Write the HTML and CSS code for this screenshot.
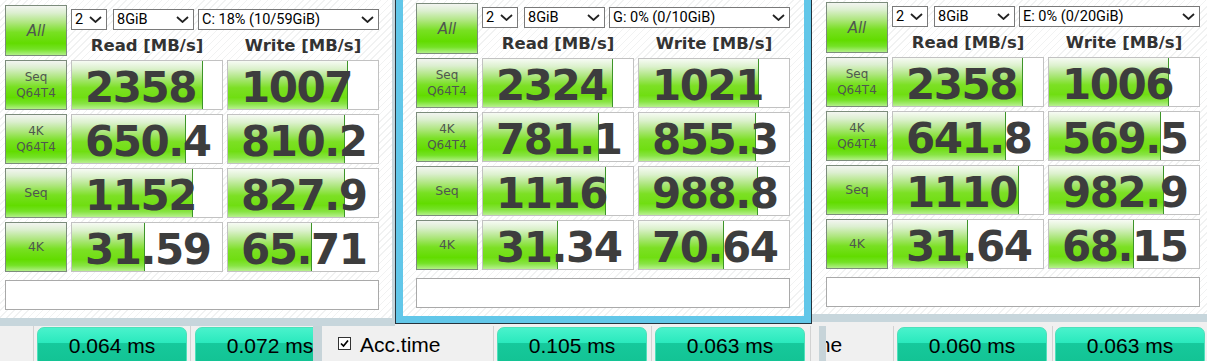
FILE: index.html
```html
<!DOCTYPE html>
<html lang="en">
<head>
<meta charset="utf-8">
<title>CrystalDiskMark comparison</title>
<link rel="stylesheet" href="styles.css">
</head>
<body>
<div class="desk">
  <div class="windows">
    <section class="win win1 hatch">
      <div class="panel">
        <div class="btn btn-all">All</div>
        <div class="head">
          <div class="controls">
            <div class="dd dd-n"><span>2</span><svg width="13" height="7" viewBox="0 0 13 7"><polyline points="1,1 6.5,6 12,1" fill="none" stroke="#222" stroke-width="1.8"/></svg></div>
            <div class="dd dd-size"><span>8GiB</span><svg width="13" height="7" viewBox="0 0 13 7"><polyline points="1,1 6.5,6 12,1" fill="none" stroke="#222" stroke-width="1.8"/></svg></div>
            <div class="dd dd-drive"><span>C: 18% (10/59GiB)</span><svg width="13" height="7" viewBox="0 0 13 7"><polyline points="1,1 6.5,6 12,1" fill="none" stroke="#222" stroke-width="1.8"/></svg></div>
          </div>
          <div class="titles"><div>Read [MB/s]</div><div>Write [MB/s]</div></div>
        </div>
        <div class="btn">Seq<br>Q64T4</div>
        <div class="cell" style="--w:130px">2358</div>
        <div class="cell" style="--w:119px">1007</div>
        <div class="btn">4K<br>Q64T4</div>
        <div class="cell" style="--w:113px">650.4</div>
        <div class="cell" style="--w:116px">810.2</div>
        <div class="btn btn-big">Seq</div>
        <div class="cell" style="--w:120px">1152</div>
        <div class="cell" style="--w:116px">827.9</div>
        <div class="btn btn-big">4K</div>
        <div class="cell" style="--w:72px">31.59</div>
        <div class="cell" style="--w:83px">65.71</div>
        <div class="comment"></div>
      </div>
    </section>

    <section class="win win3 hatch">
      <div class="panel">
        <div class="btn btn-all">All</div>
        <div class="head">
          <div class="controls">
            <div class="dd dd-n"><span>2</span><svg width="13" height="7" viewBox="0 0 13 7"><polyline points="1,1 6.5,6 12,1" fill="none" stroke="#222" stroke-width="1.8"/></svg></div>
            <div class="dd dd-size"><span>8GiB</span><svg width="13" height="7" viewBox="0 0 13 7"><polyline points="1,1 6.5,6 12,1" fill="none" stroke="#222" stroke-width="1.8"/></svg></div>
            <div class="dd dd-drive"><span>E: 0% (0/20GiB)</span><svg width="13" height="7" viewBox="0 0 13 7"><polyline points="1,1 6.5,6 12,1" fill="none" stroke="#222" stroke-width="1.8"/></svg></div>
          </div>
          <div class="titles"><div>Read [MB/s]</div><div>Write [MB/s]</div></div>
        </div>
        <div class="btn">Seq<br>Q64T4</div>
        <div class="cell" style="--w:129px">2358</div>
        <div class="cell" style="--w:119px">1006</div>
        <div class="btn">4K<br>Q64T4</div>
        <div class="cell" style="--w:112px">641.8</div>
        <div class="cell" style="--w:111px">569.5</div>
        <div class="btn btn-big">Seq</div>
        <div class="cell" style="--w:125px">1110</div>
        <div class="cell" style="--w:114px">982.9</div>
        <div class="btn btn-big">4K</div>
        <div class="cell" style="--w:74px">31.64</div>
        <div class="cell" style="--w:84px">68.15</div>
        <div class="comment"></div>
      </div>
    </section>

    <section class="win win2">
      <div class="client hatch">
        <div class="panel">
          <div class="btn btn-all">All</div>
          <div class="head">
            <div class="controls">
              <div class="dd dd-n"><span>2</span><svg width="13" height="7" viewBox="0 0 13 7"><polyline points="1,1 6.5,6 12,1" fill="none" stroke="#222" stroke-width="1.8"/></svg></div>
              <div class="dd dd-size"><span>8GiB</span><svg width="13" height="7" viewBox="0 0 13 7"><polyline points="1,1 6.5,6 12,1" fill="none" stroke="#222" stroke-width="1.8"/></svg></div>
              <div class="dd dd-drive"><span>G: 0% (0/10GiB)</span><svg width="13" height="7" viewBox="0 0 13 7"><polyline points="1,1 6.5,6 12,1" fill="none" stroke="#222" stroke-width="1.8"/></svg></div>
            </div>
            <div class="titles"><div>Read [MB/s]</div><div>Write [MB/s]</div></div>
          </div>
          <div class="btn">Seq<br>Q64T4</div>
          <div class="cell" style="--w:129px">2324</div>
          <div class="cell" style="--w:119px">1021</div>
          <div class="btn">4K<br>Q64T4</div>
          <div class="cell" style="--w:115px">781.1</div>
          <div class="cell" style="--w:116px">855.3</div>
          <div class="btn btn-big">Seq</div>
          <div class="cell" style="--w:122px">1116</div>
          <div class="cell" style="--w:118px">988.8</div>
          <div class="btn btn-big">4K</div>
          <div class="cell" style="--w:74px">31.34</div>
          <div class="cell" style="--w:84px">70.64</div>
          <div class="comment"></div>
        </div>
      </div>
    </section>
  </div>

  <div class="strip">
    <div class="sc sc-a"></div>
    <div class="sc sc-b"><div class="pill">0.064 ms</div></div>
    <div class="sc sc-c"><div class="pill">0.072 ms</div></div>
    <div class="sc sc-d"><span class="chk"><svg width="11" height="11" viewBox="0 0 11 11"><polyline points="2,5.5 4.5,8 9,2.5" fill="none" stroke="#000" stroke-width="1.7"/></svg></span><span class="acc">Acc.time</span></div>
    <div class="sc sc-e"><div class="pill">0.105 ms</div></div>
    <div class="sc sc-f"><div class="pill">0.063 ms</div></div>
    <div class="sc sc-gap"></div>
    <div class="sc sc-g"><span class="acc-tail">me</span></div>
    <div class="sc sc-h"><div class="pill">0.060 ms</div></div>
    <div class="sc sc-i"><div class="pill">0.063 ms</div></div>
  </div>
</div>
</body>
</html>
```

FILE: styles.css
```css
* { box-sizing: border-box; }
html, body { margin: 0; padding: 0; }
body {
  background: #f0f0f0;
  font-family: "DejaVu Sans", sans-serif;
}

.desk {
  width: 1207px;
  height: 361px;
  overflow: hidden;
  display: flex;
  flex-direction: column;
}

.windows {
  position: relative;
  height: 326px;
  flex: none;
}

.win { position: absolute; top: 0; }

.hatch {
  background-color: #fff;
  background-image: repeating-linear-gradient(135deg, #ffffff 0 4px, #f1f2f2 4px 5px);
}

.win1 {
  left: 0;
  width: 395px;
  height: 326px;
  border-right: 3px solid #c7d6dc;
  border-bottom: 8px solid #c7d6dc;
  padding: 5px 0 0 5px;
}

.win3 {
  left: 811px;
  width: 396px;
  height: 322px;
  border-bottom: 8px solid #c7d6dc;
  padding: 2px 0 0 15px;
}

.win2 {
  left: 395px;
  top: -20px;
  width: 417px;
  height: 344px;
  border: 1px solid #26333c;
  background: #62c7e9;
  padding: 7px;
}

.client {
  height: 100%;
  padding: 15px 0 0 13px;
}

.panel {
  width: 374px;
  display: grid;
  grid-template-columns: 62px 152px 152px;
  grid-template-rows: 51px repeat(4, 50px) 30px;
  column-gap: 4px;
  row-gap: 4px;
}

.head {
  grid-column: 2 / 4;
  padding-top: 4px;
}

.controls { display: flex; }

.dd {
  height: 21px;
  border: 1px solid #7a7a7a;
  background: #fff;
  display: flex;
  justify-content: space-between;
  align-items: flex-start;
  padding: 1px 4px 0 3px;
  font: 14.5px/18px Roboto, "Liberation Sans", sans-serif;
  color: #000;
  white-space: nowrap;
}
.dd svg { margin-top: 5px; flex: none; }
.dd-n { width: 36px; }
.dd-size { width: 81px; margin-left: 6px; }
.dd-drive { width: 181px; margin-left: 4px; }

.titles {
  display: grid;
  grid-template-columns: 152px 152px;
  column-gap: 4px;
  margin-top: 5px;
  font: bold 16.5px/22px "DejaVu Sans", sans-serif;
  color: #333;
  text-align: center;
  white-space: nowrap;
}

.btn {
  border: 1px solid #7c8c7c;
  background: linear-gradient(to bottom,
    #f3f5f1 0%, #dcefd0 14%, #aee67e 34%, #78e022 54%,
    #62dc00 76%, #74e226 88%, #b2f088 100%);
  display: flex;
  align-items: center;
  justify-content: center;
  text-align: center;
  color: #4f574f;
  font: 12px/16px "DejaVu Sans", sans-serif;
}
.btn-all {
  font-size: 15px;
  font-style: italic;
}
.btn-big { font-size: 12.5px; }

.cell {
  height: 50px;
  border: 1px solid #c2c2c2;
  background-color: #fff;
  background-image:
    linear-gradient(#3d9428, #3d9428),
    linear-gradient(to bottom,
      #f7fbf4 0%, #dcf1cd 16%, #ace67c 36%, #7ce024 56%,
      #70de12 76%, #88e444 89%, #b8f090 100%);
  background-size: 1px 100%, var(--w) 100%;
  background-position: var(--w) 0, 0 0;
  background-repeat: no-repeat;
  padding: 4.5px 0 0 13px;
  font: bold 42px/43.5px "DejaVu Sans", sans-serif;
  letter-spacing: -1.5px;
  color: #3d3d3d;
  white-space: nowrap;
}

.comment {
  grid-column: 1 / -1;
  margin-top: 4px;
  height: 30px;
  border: 1px solid #a9a9a9;
  background: #fff;
}

/* bottom access-time strip */
.strip {
  flex: 1;
  display: flex;
  overflow: hidden;
  font: 21px/24px "Liberation Sans", Arial, sans-serif;
  color: #000;
}
.sc {
  flex: none;
  height: 100%;
  border-right: 1px solid #d2d2d2;
  overflow: hidden;
}
.sc-a { width: 34px; }
.sc-b { width: 157px; padding-left: 3px; }
.sc-c { width: 122px; padding-left: 4px; border-right: 0; }
.sc-d {
  width: 181px;
  border-left: 9px solid #c7d4d9;
  padding: 7px 0 0 16px;
  display: flex;
  align-items: flex-start;
}
.sc-e { width: 158px; padding-left: 3px; }
.sc-f { width: 159px; padding-left: 3px; }
.sc-gap { width: 8px; border-right: 0; }
.sc-g {
  width: 75px;
  border-left: 7px solid #c7d4d9;
  padding-top: 7px;
  white-space: nowrap;
}
.sc-h { width: 159px; padding-left: 3px; }
.sc-i { width: 154px; padding-left: 2px; border-right: 0; }

.pill {
  width: 150px;
  height: 40px;
  margin-top: 1px;
  border: 1px solid #4fe0bb;
  border-radius: 7px;
  background: linear-gradient(to bottom,
    #49f2cc 0, #2ae9bd 15px, #16c99c 15px, #12c292 100%);
  padding-top: 6px;
  text-align: center;
  white-space: nowrap;
}

.chk {
  width: 13px;
  height: 13px;
  margin-top: 4px;
  border: 1px solid #333;
  background: #fff;
  display: flex;
  align-items: center;
  justify-content: center;
  flex: none;
}
.acc { margin-left: 9px; white-space: nowrap; }
.acc-tail { display: inline-block; margin-left: -13px; }
```
